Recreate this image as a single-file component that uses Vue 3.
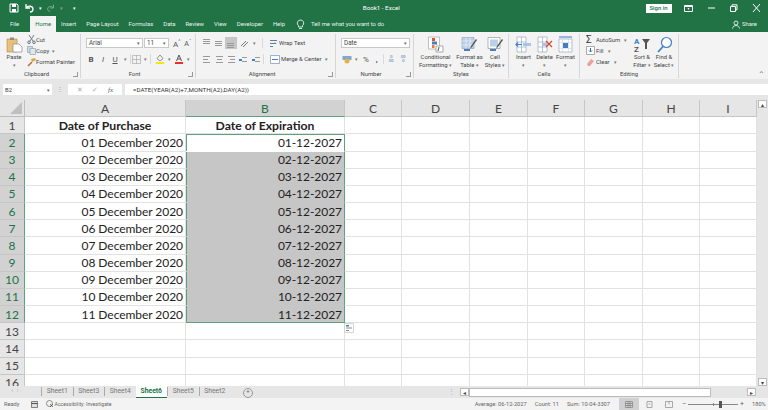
<template>
  <div class="excel">
    <!-- title bar -->
    <header class="titlebar">
      <div class="qat">
        <svg width="10" height="10" viewBox="0 0 10 10"><path d="M1 1h7l1 1v7H1z" fill="none" stroke="#fff" /><path d="M3 1h4v3H3zM3 6h4v3H3z" fill="#fff" /></svg>
        <svg width="12" height="10" viewBox="0 0 12 10"><path d="M3 1v4h4M3 5c2-3 7-2 7 1 0 2-1 3-3 3" fill="none" stroke="#fff" stroke-width="1.3" /></svg>
        <span class="mini-caret">▾</span>
        <svg class="dim" width="10" height="10" viewBox="0 0 12 10"><path d="M9 1v4H5M9 5C7 2 2 3 2 6c0 2 1 3 3 3" fill="none" stroke="#fff" stroke-width="1.2" /></svg>
        <span class="mini-caret dim">▾</span>
        <span class="mini-caret qat-more">▾</span>
      </div>
      <div class="doc-title">Book1 - Excel</div>
      <div class="win-btns">
        <span class="sign-in">Sign in</span>
        <svg width="9" height="8" viewBox="0 0 9 8"><path d="M.5 1.500h8v6h-8z" fill="none" stroke="#fff" /><path d="M.5 1h8v2h-8zM3.500 4l1 2 1-2z" fill="#fff" /></svg>
        <svg width="9" height="8" viewBox="0 0 9 8"><path d="M1 4h7" stroke="#fff" /></svg>
        <svg width="9" height="8" viewBox="0 0 9 8"><path d="M1.500 2.500h5v5h-5zM3 2.500V.8h5v5H6.500" fill="none" stroke="#fff" /></svg>
        <svg width="9" height="8" viewBox="0 0 9 8"><path d="M1 0l7 8M8 0L1 8" stroke="#fff" /></svg>
      </div>
    </header>

    <!-- ribbon tabs -->
    <nav class="tabs">
      <span v-for="t in tabs" :key="t" class="tab" :class="{ active: t === 'Home', file: t === 'File' }">{{ t }}</span>
      <svg class="bulb" width="9" height="11" viewBox="0 0 9 11"><path d="M4.500 1a3.200 3.200 0 0 0-2 5.700V8h4V6.700a3.200 3.200 0 0 0-2-5.700zM3 9.500h3" fill="none" stroke="#fff" stroke-width=".8" /></svg>
      <span class="tell-me">Tell me what you want to do</span>
      <span class="share">
        <svg width="8" height="9" viewBox="0 0 8 9"><circle cx="4" cy="3" r="2" fill="none" stroke="#fff" stroke-width=".8" /><path d="M.5 8.500c.5-4 6.500-4 7 0" fill="none" stroke="#fff" stroke-width=".8" /></svg>
        Share
      </span>
    </nav>

    <!-- ribbon -->
    <section class="ribbon">
      <div class="group g-clip">
        <div class="group-body">
          <div class="big-btn paste">
            <svg width="17" height="17" viewBox="0 0 17 17"><path d="M1 3h10v13H1z" fill="#e8c27a" stroke="#b08a4a" stroke-width=".6" /><path d="M4 1.500h4V4H4z" fill="#8a8a8a" /><path d="M7 8h6l3 3v5H7z" fill="#fff" stroke="#8a8a8a" stroke-width=".7" /></svg>
            <span>Paste</span>
            <span class="caret">▾</span>
          </div>
          <div class="small-col">
            <div class="small-btn">
              <svg width="9" height="9" viewBox="0 0 9 9"><path d="M2 0l4 6M7 0L3 6" stroke="#6b7f96" /><circle cx="2" cy="7.300" r="1.300" fill="none" stroke="#456" stroke-width=".8" /><circle cx="7" cy="7.300" r="1.300" fill="none" stroke="#456" stroke-width=".8" /></svg>
              Cut
            </div>
            <div class="small-btn">
              <svg width="9" height="9" viewBox="0 0 9 9"><path d="M.5.500h5v6h-5z" fill="#cfd8e3" stroke="#8a97a6" stroke-width=".6" /><path d="M3 2.500h5.500v6H3z" fill="#dfe6ee" stroke="#8a97a6" stroke-width=".6" /></svg>
              Copy <span class="caret side">▾</span>
            </div>
            <div class="small-btn">
              <svg width="9" height="9" viewBox="0 0 9 9"><path d="M4 1l4-1 1 2-4 2z" fill="#d9a441" /><path d="M5 4L1 8" stroke="#c0652d" stroke-width="1.500" /></svg>
              Format Painter
            </div>
          </div>
        </div>
        <div class="group-label">Clipboard<i class="launcher"></i></div>
      </div>

      <div class="group g-font">
        <div class="group-body stack">
          <div class="row">
            <span class="select font-name">Arial<b>▾</b></span>
            <span class="select font-size">11<b>▾</b></span>
            <span class="glyph font-grow">A<sup>^</sup></span>
            <span class="glyph font-grow small">A<sup>ˇ</sup></span>
          </div>
          <div class="row font-row">
            <span class="glyph fmt"><b>B</b></span>
            <span class="glyph fmt"><i>I</i></span>
            <span class="glyph fmt"><u>U</u></span>
            <span class="caret side">▾</span>
            <i class="vsep"></i>
            <svg width="9" height="9" viewBox="0 0 9 9"><path d="M.5.500h8v8h-8zM4.500.5v8M.5 4.500h8" fill="none" stroke="#aaa" stroke-width=".7" /></svg>
            <span class="caret side">▾</span>
            <i class="vsep far"></i>
            <svg width="10" height="10" viewBox="0 0 10 10"><path d="M5 1L2 4.500 5 7l3-2.500z" fill="none" stroke="#777" stroke-width=".8" /><path d="M1 8h8v2H1z" fill="#f4e511" /></svg>
            <span class="caret side">▾</span>
            <svg width="10" height="10" viewBox="0 0 10 10"><path d="M2.500 7L5 1l2.500 6M3.500 5h3" fill="none" stroke="#555" /><path d="M1 8h8v2H1z" fill="#e8312f" /></svg>
            <span class="caret side">▾</span>
          </div>
        </div>
        <div class="group-label">Font<i class="launcher"></i></div>
      </div>

      <div class="group g-align">
        <div class="group-body stack">
          <div class="row">
            <i v-for="(c, i) in ['top', 'mid', 'bot']" :key="c" class="lines" :class="[c, { on: i === 2 }]"></i>
            <svg class="orient" width="10" height="9" viewBox="0 0 10 9"><path d="M1 7l5-5M3 8l5-5" stroke="#777" /></svg>
            <span class="caret side">▾</span>
            <i class="vsep wide"></i>
            <span class="small-btn">
              <svg width="9" height="9" viewBox="0 0 9 9"><path d="M1 1.500h7M1 4.500h6l-1-1M1 7.500h3" fill="none" stroke="#5b7fa8" /></svg>
              Wrap Text
            </span>
          </div>
          <div class="row">
            <i v-for="c in ['l', 'c', 'r']" :key="c" class="lines" :class="c"></i>
            <i class="lines indent"></i>
            <i class="lines indent"></i>
            <i class="vsep wide flush"></i>
            <span class="small-btn">
              <svg width="10" height="9" viewBox="0 0 10 9"><path d="M.5.500h9v8h-9z" fill="#fff" stroke="#7d93ab" stroke-width=".7" /><path d="M2 4.500h6" stroke="#3f7fc4" /></svg>
              Merge &amp; Center <span class="caret side">▾</span>
            </span>
          </div>
        </div>
        <div class="group-label">Alignment<i class="launcher"></i></div>
      </div>

      <div class="group g-number">
        <div class="group-body stack">
          <div class="row"><span class="select format-name">Date<b>▾</b></span></div>
          <div class="row num-row">
            <svg width="10" height="9" viewBox="0 0 10 9"><path d="M.5 1h9v4h-9z" fill="#7fa8d6" /><circle cx="5" cy="6" r="2.500" fill="#e0b34a" /></svg>
            <span class="caret side">▾</span>
            <span class="glyph pct">%</span>
            <span class="glyph comma">,</span>
            <i class="vsep"></i>
            <span class="dec">.0<br />.00</span>
            <span class="dec">.00<br />.0</span>
          </div>
        </div>
        <div class="group-label">Number<i class="launcher"></i></div>
      </div>

      <div class="group g-styles">
        <div class="group-body big-row">
          <div class="big-btn b-cond">
            <svg width="17" height="17" viewBox="0 0 17 17"><path d="M1.500 1h11v12h-11z" fill="#fff" stroke="#999" stroke-width=".6" /><path d="M5 2h3v3H5z" fill="#e2513a" /><path d="M5 5.500h5v3H5z" fill="#4a7ebb" /><path d="M5 9h2.500v3H5z" fill="#ea7a35" /><path d="M9 10h7v6H9z" fill="#fff" stroke="#777" stroke-width=".6" /><path d="M12 11l-1 4" stroke="#555" /></svg>
            <span>Conditional</span>
            <span>Formatting <em>▾</em></span>
          </div>
          <div class="big-btn b-table">
            <svg width="17" height="17" viewBox="0 0 17 17"><path d="M1 1.500h12v11H1z" fill="#bcd0e6" stroke="#8aa0b8" stroke-width=".6" /><path d="M1 5h12M1 9h12M5 1.500v11M9 1.500v11" stroke="#fff" stroke-width=".5" /><path d="M16 4l-5 7-2 2 1-3 5-7z" fill="#555" /><path d="M3 13h6v2H3z" fill="#4a7ebb" /></svg>
            <span>Format as</span>
            <span>Table <em>▾</em></span>
          </div>
          <div class="big-btn b-cell">
            <svg width="17" height="17" viewBox="0 0 17 17"><path d="M1 1.500h12v11H1z" fill="#fff" stroke="#888" stroke-width=".6" /><path d="M3 3.500h8v7H3z" fill="#b8d0e8" /><path d="M16 4l-5 7-2 2 1-3 5-7z" fill="#555" /><path d="M3 13h6v2H3z" fill="#4a7ebb" /></svg>
            <span>Cell</span>
            <span>Styles <em>▾</em></span>
          </div>
        </div>
        <div class="group-label">Styles</div>
      </div>

      <div class="group g-cells">
        <div class="group-body big-row cells-row">
          <div class="big-btn b-std">
            <svg width="17" height="17" viewBox="0 0 17 17"><path d="M2 1h9v15H2zM2 6h9M2 11h9M6.500 1v15" fill="#fff" stroke="#8aa0b8" stroke-width=".6" /><path d="M1 8.500h6M3 6.500l-2 2 2 2" fill="none" stroke="#3f7fc4" stroke-width="1.200" /><path d="M8 7h8v3H8z" fill="#a9c4e4" /></svg>
            <span>Insert</span>
            <span class="caret">▾</span>
          </div>
          <div class="big-btn b-std">
            <svg width="17" height="17" viewBox="0 0 17 17"><path d="M2 1h9v15H2zM2 6h9M2 11h9M6.500 1v15" fill="#fff" stroke="#8aa0b8" stroke-width=".6" /><path d="M6 7h5v3H6z" fill="#a9c4e4" /><path d="M10 5l6 6M16 5l-6 6" stroke="#d9452f" stroke-width="1.200" /></svg>
            <span>Delete</span>
            <span class="caret">▾</span>
          </div>
          <div class="big-btn b-std">
            <svg width="17" height="17" viewBox="0 0 17 17"><path d="M2 3h13v13H2z" fill="#fff" stroke="#8aa0b8" stroke-width=".6" /><path d="M2 6.500h13M2 12.500h13M5.500 3v13M11.500 3v13" stroke="#c4d0dc" stroke-width=".5" /><path d="M6 7h5v5H6z" fill="#3f7fc4" /><path d="M2 1h13" stroke="#3f7fc4" /></svg>
            <span>Format</span>
            <span class="caret">▾</span>
          </div>
        </div>
        <div class="group-label">Cells</div>
      </div>

      <div class="group g-edit">
        <div class="group-body">
          <div class="small-col edit-col">
            <div class="small-btn"><span class="sigma">Σ</span> AutoSum <span class="caret side auto-caret">▾</span></div>
            <div class="small-btn">
              <svg width="9" height="9" viewBox="0 0 9 9"><path d="M.5.500h8v8h-8z" fill="#fff" stroke="#777" stroke-width=".6" /><path d="M4.500 2v4M3 4.500L4.500 6 6 4.500" fill="none" stroke="#2e6db3" /></svg>
              Fill <span class="caret side">▾</span>
            </div>
            <div class="small-btn">
              <svg width="9" height="9" viewBox="0 0 9 9"><path d="M1 6l4-5 3 2-4 5H2z" fill="#e8a29a" /></svg>
              Clear <span class="caret side">▾</span>
            </div>
          </div>
          <div class="big-btn b-edit">
            <svg width="17" height="17" viewBox="0 0 17 17"><text x="0" y="7.500" class="az blue">A</text><text x="0" y="15.500" class="az">Z</text><path d="M8 3h8l-3 4v6h-2V7z" fill="#555" /></svg>
            <span>Sort &amp;</span>
            <span>Filter <em>▾</em></span>
          </div>
          <div class="big-btn b-edit">
            <svg width="17" height="17" viewBox="0 0 17 17"><circle cx="10.500" cy="6.500" r="5" fill="#fff" stroke="#3f7fc4" stroke-width="1.200" /><path d="M7 10.500l-5 5.500" stroke="#3f7fc4" stroke-width="1.800" /></svg>
            <span>Find &amp;</span>
            <span>Select <em>▾</em></span>
          </div>
        </div>
        <div class="group-label">Editing</div>
      </div>
      <span class="collapse">⌃</span>
    </section>

    <!-- formula bar -->
    <div class="formula-bar">
      <span class="name-box">B2<b>▾</b></span>
      <span class="dots">⋮</span>
      <span class="fx-box"><span>✕</span><span>✓</span><i>fx</i></span>
      <span class="formula">=DATE(YEAR(A2)+7,MONTH(A2),DAY(A2))</span>
    </div>

    <!-- sheet -->
    <div class="sheet">
      <div class="grid">
        <div class="corner"><i></i></div>
        <div v-for="c in columns" :key="c" class="col-head" :class="{ picked: c === 'B' }">{{ c }}</div>
        <template v-for="r in rows" :key="r.n">
          <div class="row-head" :class="{ picked: r.n >= 2 && r.n <= 12 }">{{ r.n }}</div>
          <div class="cell" :class="{ title: r.n === 1, num: r.n > 1 }">{{ r.a }}</div>
          <div class="cell" :class="bClass(r.n)">
            {{ r.b }}
            <span v-if="r.n === 12" class="quick">
              <svg width="10" height="10" viewBox="0 0 10 10"><path d="M.5.500h9v9h-9z" fill="#fff" stroke="#bbb" stroke-width=".6" /><path d="M2 2h3v1.500H2z" fill="#3f7fc4" /><path d="M2 5h6M2 7.500h3" stroke="#888" /></svg>
            </span>
          </div>
          <div v-for="c in blanks" :key="c" class="cell"></div>
        </template>
      </div>
      <div class="vscroll">
        <span class="arrow">▴</span>
        <span class="thumb"></span>
        <span class="arrow">▾</span>
      </div>
    </div>

    <!-- sheet tabs -->
    <div class="sheet-tabs">
      <span class="nav-arrows">‹ &nbsp;›</span>
      <span v-for="s in sheets" :key="s" class="sheet-tab" :class="{ current: s === 'Sheet6' }">{{ s }}</span>
      <span class="add-sheet">+</span>
      <span class="hdots">⋮</span>
      <div class="hscroll">
        <span class="arrow">◂</span>
        <span class="hthumb"></span>
        <span class="arrow">▸</span>
      </div>
    </div>

    <!-- status bar -->
    <footer class="status">
      <span class="ready">Ready</span>
      <svg class="macro" width="7" height="7" viewBox="0 0 7 7"><path d="M.5.500h6v6h-6z" fill="#ddd" stroke="#555" stroke-width=".7" /><path d="M.5 2.500h6" stroke="#555" /></svg>
      <svg class="access" width="8" height="8" viewBox="0 0 8 8"><circle cx="3.500" cy="3.500" r="3" fill="none" stroke="#666" stroke-width=".7" /><path d="M4 4l3 3M7 4L4 7" stroke="#444" stroke-width=".7" /></svg>
      <span class="access-text">Accessibility: Investigate</span>
      <span class="stat avg">Average: 06-12-2027</span>
      <span class="stat">Count: 11</span>
      <span class="stat">Sum: 10-04-3307</span>
      <span class="view on"><svg width="8" height="7" viewBox="0 0 8 7"><path d="M.5.500h7v6h-7zM.5 2.500h7M.5 4.500h7M3 .5v6M5 .5v6" fill="none" stroke="#777" stroke-width=".6" /></svg></span>
      <span class="view"><svg width="7" height="7" viewBox="0 0 7 7"><path d="M1 .5h5v6H1zM2.500 3h2" fill="none" stroke="#888" stroke-width=".7" /></svg></span>
      <span class="view"><svg width="8" height="7" viewBox="0 0 8 7"><path d="M.5.500h7v6h-7zM4 .5v3" fill="none" stroke="#888" stroke-width=".7" /></svg></span>
      <span class="zoom">
        <span>−</span>
        <span class="slider"><i class="tick"></i><i class="knob"></i></span>
        <span>+</span>
      </span>
      <span class="pct-label">180%</span>
    </footer>
  </div>
</template>

<script setup>
const tabs = ['File', 'Home', 'Insert', 'Page Layout', 'Formulas', 'Data', 'Review', 'View', 'Developer', 'Help']
const columns = ['A', 'B', 'C', 'D', 'E', 'F', 'G', 'H', 'I']
const blanks = ['C', 'D', 'E', 'F', 'G', 'H', 'I']
const sheets = ['Sheet1', 'Sheet3', 'Sheet4', 'Sheet6', 'Sheet5', 'Sheet2']

const pad = (n) => String(n).padStart(2, '0')

// row 1 is the heading, 2-12 the dates, the rest is empty
const rows = Array.from({ length: 16 }, (_, i) => {
  const n = i + 1
  if (n === 1) return { n, a: 'Date of Purchase', b: 'Date of Expiration' }
  if (n <= 12) return { n, a: `${pad(n - 1)} December 2020`, b: `${pad(n - 1)}-12-2027` }
  return { n, a: '', b: '' }
})

const bClass = (n) => {
  if (n === 1) return 'title'
  if (n > 12) return ''
  return {
    num: true,
    range: true,
    active: n === 2,
    last: n === 12,
  }
}
</script>

<style scoped>
.excel {
  width: 768px;
  height: 410px;
  display: flex;
  flex-direction: column;
  overflow: hidden;
  background: #e6e6e6;
  color: #444;
  font-family: Roboto, "Liberation Sans", sans-serif;
  font-size: 5.9px;
}

/* title bar */
.titlebar {
  height: 16px;
  display: flex;
  align-items: center;
  background: #217346;
  color: #fff;
}
.qat {
  display: flex;
  align-items: center;
  gap: 4px;
  padding-left: 9px;
}
.dim {
  opacity: 0.4;
}
.mini-caret {
  font-size: 5px;
}
.qat-more {
  margin-left: 6px;
}
.doc-title {
  flex: 1;
  text-align: center;
  padding-left: 41px;
  font-size: 6.2px;
}
.win-btns {
  display: flex;
  align-items: center;
  gap: 13.5px;
  padding-right: 7.5px;
}
.sign-in {
  width: 26px;
  height: 9px;
  margin-right: -1px;
  background: #fff;
  color: #217346;
  text-align: center;
  line-height: 9px;
  font-weight: 500;
}

/* tabs */
.tabs {
  height: 16px;
  display: flex;
  align-items: stretch;
  background: #217346;
  color: #e8f2ec;
  padding-left: 10px;
}
.tab {
  display: flex;
  align-items: center;
  padding: 0 5px;
  white-space: nowrap;
}
.tab.file {
  padding: 0 11px 0 0;
}
.tab.active {
  background: #f3f3f3;
  color: #217346;
}
.bulb {
  align-self: center;
  margin: 0 5.5px 0 6.5px;
}
.tell-me {
  align-self: center;
}
.share {
  align-self: center;
  margin-left: auto;
  padding-right: 11px;
  display: flex;
  align-items: center;
  gap: 2px;
}

/* ribbon */
.ribbon {
  height: 47px;
  display: flex;
  background: #f3f3f3;
  position: relative;
  flex-shrink: 0;
}
.group {
  display: flex;
  flex-direction: column;
  height: 44px;
  margin-top: 2px;
  border-right: 1px solid #d6d6d6;
  box-sizing: border-box;
}
.g-clip {
  width: 81px;
}
.g-font {
  width: 115px;
}
.g-align {
  width: 140px;
}
.g-number {
  width: 78px;
}
.g-styles {
  width: 95px;
}
.g-cells {
  width: 71px;
}
.g-edit {
  width: 99px;
}
.group-body {
  flex: 1;
  display: flex;
  min-height: 0;
}
.group-body.stack {
  flex-direction: column;
  padding: 3px 0 0 5px;
  gap: 4px;
}
.group-label {
  height: 9px;
  line-height: 9px;
  text-align: center;
  position: relative;
  top: 1px;
}
.g-clip .group-label,
.g-font .group-label,
.g-align .group-label,
.g-number .group-label {
  padding-right: 7px;
}
.launcher {
  position: absolute;
  right: 2px;
  top: 2px;
  width: 4px;
  height: 4px;
  border: solid #999;
  border-width: 0 1px 1px 0;
}
.row {
  display: flex;
  align-items: center;
  height: 12px;
}
.select {
  height: 10px;
  margin-right: 1px;
  padding: 0 2px;
  box-sizing: border-box;
  display: flex;
  align-items: center;
  justify-content: space-between;
  background: #fff;
  border: 1px solid #c8c8c8;
  font-size: 6.3px;
}
.font-name {
  width: 57px;
}
.font-size {
  width: 25px;
}
.format-name {
  width: 69px;
}
.select b,
.name-box b {
  font-size: 5px;
  font-weight: 400;
  color: #666;
}
.glyph {
  color: #555;
  font-size: 8px;
}
.font-grow {
  margin-left: 3px;
}
.font-grow.small {
  margin-left: 4px;
  font-size: 7px;
}
.font-grow sup {
  font-size: 5px;
  color: #3f7fc4;
}
.font-row {
  margin-left: -1px;
}
.fmt {
  width: 12px;
  text-align: center;
}
.caret {
  font-size: 5px;
  color: #777;
  line-height: 6px;
}
.caret.side {
  display: inline-block;
  width: 3px;
  margin: 0 3px;
  text-align: center;
}
.vsep {
  width: 1px;
  height: 10px;
  margin-right: 1px;
  background: #d9d9d9;
}
.vsep.far {
  margin-right: 4px;
}
.vsep.wide {
  margin: 0 6px 0 3px;
}
.vsep.flush {
  margin-left: 0;
}

/* alignment icons */
.lines {
  width: 12px;
  height: 12px;
  background-repeat: no-repeat;
  background-image: linear-gradient(#999, #999), linear-gradient(#999, #999), linear-gradient(#999, #999);
  background-size: 7px 1px;
}
.lines.top {
  background-position: 2px 2px, 2px 4px, 2px 6px;
}
.lines.mid {
  background-position: 2px 4px, 2px 6px, 2px 8px;
}
.lines.bot {
  background-position: 2px 6px, 2px 8px, 2px 10px;
}
.lines.on {
  background-color: #c6c6c6;
}
.lines.l {
  background-position: 2px 3px, 2px 6px, 2px 9px;
  background-size: 7px 1px, 5px 1px, 7px 1px;
}
.lines.c {
  background-position: 3px 3px, 4px 6px, 3px 9px;
  background-size: 7px 1px, 5px 1px, 7px 1px;
}
.lines.r {
  background-position: 3px 3px, 5px 6px, 3px 9px;
  background-size: 7px 1px, 5px 1px, 7px 1px;
}
.lines.indent {
  background-image: linear-gradient(#3f7fc4, #3f7fc4), linear-gradient(#999, #999), linear-gradient(#999, #999);
  background-position: 2px 6px, 5px 4px, 5px 8px;
  background-size: 3px 2px, 5px 1px, 5px 1px;
  margin-right: 1px;
}
.orient {
  margin-left: 3px;
}

/* number */
.num-row {
  padding-left: 1px;
}
.pct {
  margin: 0 7px 0 2px;
}
.comma {
  margin-right: 5px;
  font-weight: 700;
}
.dec {
  width: 12px;
  font-size: 4px;
  line-height: 4.5px;
  color: #3f6fa8;
  text-align: center;
}

/* big buttons */
.big-btn {
  flex-shrink: 0;
  display: flex;
  flex-direction: column;
  align-items: center;
  white-space: nowrap;
  line-height: 7.8px;
}
.big-btn svg {
  margin-bottom: 1px;
  flex-shrink: 0;
}
.big-btn em {
  font-style: normal;
  font-size: 5px;
  color: #777;
}
.paste {
  width: 26px;
  padding-top: 2px;
  margin-left: 1px;
}
.b-cond {
  width: 37px;
}
.b-table {
  width: 31px;
}
.b-cell {
  width: 20px;
}
.b-std {
  width: 21px;
}
.b-edit {
  width: 22px;
  padding-top: 2px;
}
.big-row {
  padding: 2px 0 0 3px;
}
.cells-row {
  padding-left: 4px;
}

/* small buttons */
.small-col {
  display: flex;
  flex-direction: column;
  justify-content: space-around;
  height: 34px;
  white-space: nowrap;
}
.small-btn {
  display: flex;
  align-items: center;
  gap: 1px;
  white-space: nowrap;
}
.g-clip .small-btn {
  gap: 0;
}
.edit-col {
  width: 51px;
  flex-shrink: 0;
  box-sizing: border-box;
  padding-left: 6px;
}
.sigma {
  width: 9px;
  font-size: 10px;
  line-height: 9px;
  color: #333;
}
.auto-caret {
  margin-left: 6px;
}
.az {
  font-size: 8px;
  font-weight: 700;
  fill: #555;
}
.az.blue {
  fill: #3f7fc4;
}
.collapse {
  position: absolute;
  right: 3px;
  bottom: 1px;
  color: #777;
  font-size: 8px;
  line-height: 6px;
}

/* formula bar */
.formula-bar {
  height: 11px;
  margin: 5px 0;
  display: flex;
  align-items: stretch;
  flex-shrink: 0;
}
.name-box {
  width: 49px;
  margin-left: 3px;
  padding: 0 2px;
  box-sizing: border-box;
  display: flex;
  align-items: center;
  justify-content: space-between;
  background: #fff;
}
.dots {
  width: 16px;
  text-align: center;
  line-height: 11px;
  color: #999;
}
.fx-box {
  width: 54px;
  display: flex;
  align-items: center;
  justify-content: space-around;
  background: #fff;
  color: #aaa;
  padding: 0 4px;
  box-sizing: border-box;
  font-size: 7px;
}
.fx-box i {
  font-family: "Liberation Serif", serif;
  color: #555;
}
.formula {
  flex: 1;
  margin-left: 3px;
  padding-left: 8px;
  display: flex;
  align-items: center;
  background: #fff;
  color: #333;
  font-size: 6.2px;
}

/* sheet */
.sheet {
  height: 286px;
  display: flex;
  background: #fff;
  overflow: hidden;
  flex-shrink: 0;
}
.grid {
  width: 757px;
  display: grid;
  grid-template-columns: 25px 161px 159px 57px 68px 58px 57px 58px 57px 57px;
  grid-auto-rows: 17.18px;
  align-content: start;
  font-family: Lato, "Liberation Sans", sans-serif;
}
.corner {
  background: #e6e6e6;
  border-right: 1px solid #bdbdbd;
  border-bottom: 1px solid #bdbdbd;
  box-sizing: border-box;
  position: relative;
}
.corner i {
  position: absolute;
  right: 2px;
  bottom: 2px;
  border: solid transparent;
  border-width: 0 0 12px 12px;
  border-bottom-color: #bfbfbf;
}
.col-head,
.row-head {
  display: flex;
  align-items: center;
  justify-content: center;
  box-sizing: border-box;
  background: #e6e6e6;
  color: #444;
  font-size: 12px;
  border-right: 1px solid #c6c6c6;
  border-bottom: 1px solid #c6c6c6;
}
.col-head.picked {
  background: #d2d2d2;
  color: #217346;
  border-bottom: 1px solid #5f9f7d;
}
.row-head.picked {
  background: #d2d2d2;
  color: #217346;
  border-right: 1px solid #5f9f7d;
}
.cell {
  position: relative;
  box-sizing: border-box;
  padding: 0 2px;
  display: flex;
  align-items: center;
  white-space: nowrap;
  color: #222;
  font-size: 12px;
  border-right: 1px solid #e2e2e2;
  border-bottom: 1px solid #e2e2e2;
}
.cell.title {
  justify-content: center;
  font-weight: 700;
  font-size: 12.2px;
}
.cell.num {
  justify-content: flex-end;
  letter-spacing: -0.05px;
}
.cell.range {
  background: #c6c6c6;
  border-right: 1px solid #5f9f7d;
  border-bottom-color: #c6c6c6;
  box-shadow: inset 1px 0 #5f9f7d;
}
.cell.range.active {
  background: #fff;
  box-shadow: inset 1px 0 #5f9f7d, inset 0 1px #5f9f7d;
  border-bottom-color: #fff;
}
.cell.range.last {
  border-bottom: 1px solid #5f9f7d;
}
.quick {
  position: absolute;
  z-index: 2;
  left: 100%;
  top: 100%;
  margin-top: 1px;
  height: 10px;
  display: flex;
}
.vscroll {
  width: 11px;
  display: flex;
  flex-direction: column;
  background: #e6e6e6;
  box-sizing: border-box;
  padding: 0 1px;
}
.arrow {
  flex-shrink: 0;
  height: 8px;
  width: 9px;
  line-height: 7px;
  text-align: center;
  font-size: 6px;
  background: #fff;
  border: 1px solid #bbb;
  box-sizing: border-box;
  color: #444;
}
.thumb {
  flex: 1;
}

/* sheet tabs */
.sheet-tabs {
  height: 12px;
  display: flex;
  align-items: stretch;
  background: #e6e6e6;
  flex-shrink: 0;
  font-size: 6.8px;
}
.nav-arrows {
  width: 41px;
  line-height: 11px;
  padding-left: 11px;
  box-sizing: border-box;
  font-size: 7px;
  color: #bbb;
}
.sheet-tab {
  width: 31.5px;
  height: 9px;
  margin-top: 1px;
  box-sizing: border-box;
  text-align: center;
  line-height: 8px;
  color: #777;
  border-left: 1px solid #aaa;
}
.sheet-tab.current {
  height: 12px;
  margin-top: 0;
  line-height: 10px;
  background: #fff;
  color: #217346;
  font-weight: 700;
  border-left: 0;
  border-bottom: 1px solid #217346;
}
.add-sheet {
  margin: 2px 0 0 13px;
  width: 8px;
  height: 8px;
  border: 1px solid #999;
  border-radius: 50%;
  color: #777;
  text-align: center;
  line-height: 7px;
}
.hdots {
  margin-left: 195px;
  color: #aaa;
  line-height: 12px;
}
.hscroll {
  margin-left: 5px;
  width: 288px;
  display: flex;
  align-items: center;
}
.hthumb {
  width: 240px;
  height: 7px;
  background: #fff;
  border: 1px solid #bbb;
  flex-shrink: 0;
}
.hscroll .arrow:last-child {
  margin-left: 36px;
}

/* status bar */
.status {
  flex: 1;
  display: flex;
  align-items: center;
  background: #f3f3f3;
  color: #666;
  font-size: 5.7px;
  white-space: nowrap;
}
.ready {
  margin-left: 4px;
}
.macro {
  margin-left: 11px;
}
.access {
  margin: 0 1px 0 8px;
}
.access-text {
  font-size: 5.2px;
}
.stat {
  margin-right: 8px;
}
.stat.avg {
  margin-left: auto;
}
.view {
  width: 20px;
  height: 12px;
  display: flex;
  align-items: center;
  justify-content: center;
}
.view.on {
  background: #d0d0d0;
  margin-left: 1px;
}
.zoom {
  display: flex;
  align-items: center;
  gap: 2px;
  margin-left: 3px;
  font-size: 7px;
}
.slider {
  position: relative;
  width: 50px;
  height: 1px;
  background: #888;
}
.tick {
  position: absolute;
  left: 25px;
  top: -1px;
  width: 1px;
  height: 3px;
  background: #888;
}
.knob {
  position: absolute;
  left: 31px;
  top: -3px;
  width: 3px;
  height: 7px;
  background: #555;
}
.pct-label {
  width: 13px;
  margin: 0 3px 0 8px;
}
</style>

<style>
html,
body {
  margin: 0;
  background: #e6e6e6;
}
</style>
